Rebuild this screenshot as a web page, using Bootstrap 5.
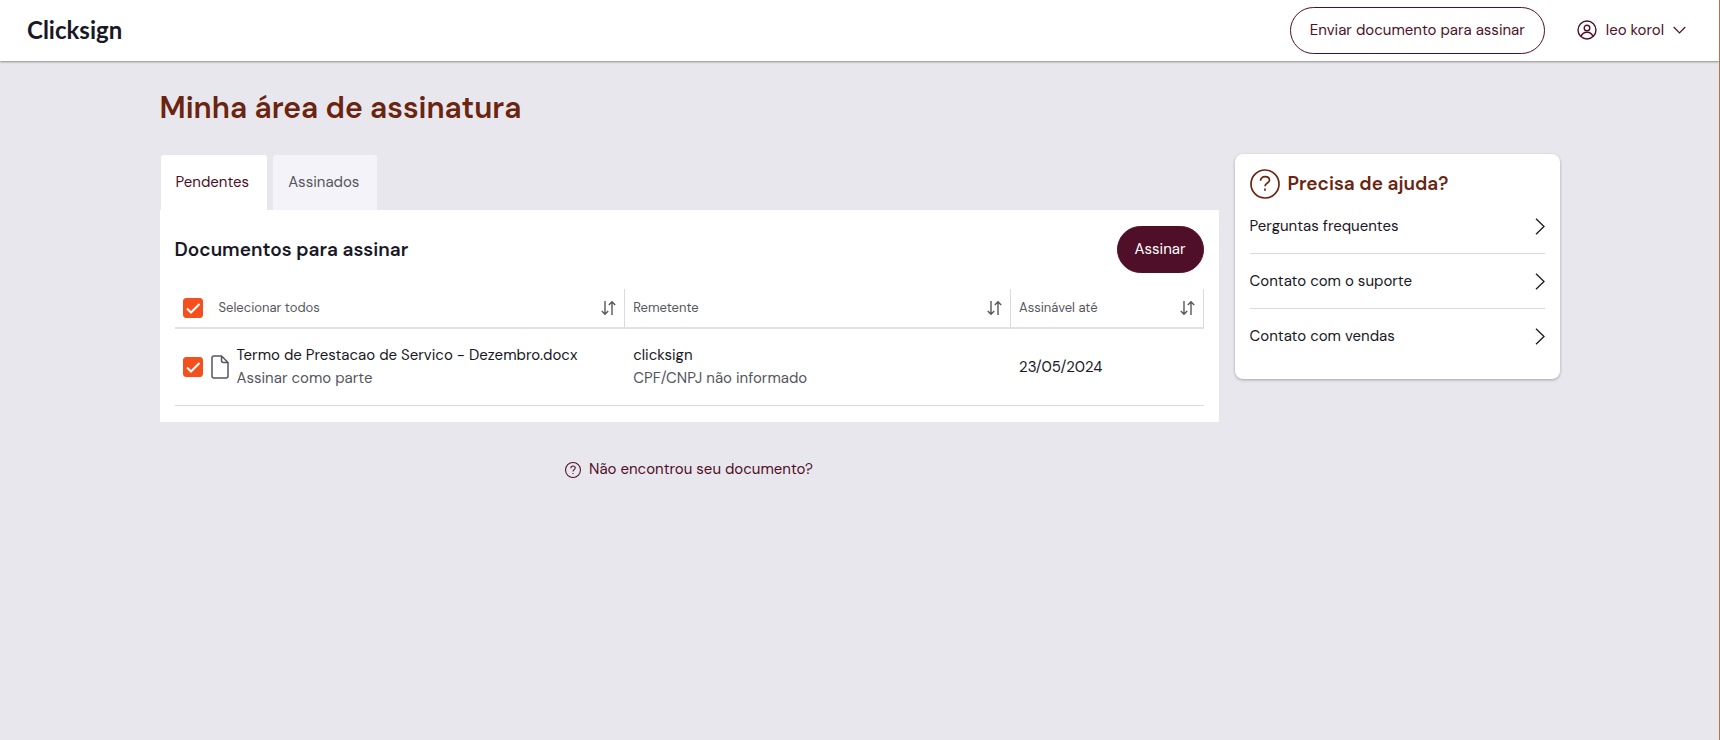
<!DOCTYPE html>
<html lang="pt-BR">
<head>
<meta charset="utf-8">
<meta name="viewport" content="width=device-width, initial-scale=1">
<title>Clicksign - Minha área de assinatura</title>
<link href="https://cdn.jsdelivr.net/npm/bootstrap@5.3.0/dist/css/bootstrap.min.css" rel="stylesheet">
<style>
  :root { --wine: #500f28; --rust: #6a2410; --ink: #191825; --soft: #56565e; --line: #dadae0; --flame: #f4501e; }
  body { font-family: "DM Sans", Inter, "Liberation Sans", sans-serif; font-size: 15px; line-height: 23px; color: var(--ink); background: #e8e7ed; min-height: 100vh; border-right: 1px solid #b07840; }
  svg { display: block; flex: none; fill: none; stroke: currentColor; }
  .topbar { min-height: 61px; box-shadow: 0 1px 2px rgba(0,0,0,.4); padding: 6px 25px 7px 27px; }
  .logo { font-family: Lato, "DM Sans", sans-serif; font-size: 24px; line-height: 30px; font-weight: 700; color: var(--ink); }
  .pill { border-radius: 24px; padding: 11px 17px; font-size: 15px; line-height: 23px; }
  .pill-line { padding: 11px 19px; --bs-btn-color: var(--wine); --bs-btn-border-color: var(--wine); --bs-btn-hover-bg: var(--wine); --bs-btn-hover-color: #fff; }
  .pill-full { --bs-btn-color: #fff; --bs-btn-bg: var(--wine); --bs-btn-border-color: var(--wine); --bs-btn-hover-bg: #6b1c3a; --bs-btn-hover-color: #fff; }
  .user { font-size: 15px; line-height: 23px; padding: 8px; gap: 9px; }
  .wine { color: var(--wine); }
  .rust { color: var(--rust); }
  .soft { color: var(--soft); }
  .shell { max-width: 1400px; }
  .page-title { font-size: 30px; line-height: 40px; font-weight: 600; margin: 27px 0 26px; }
  .sub-title { font-size: 19px; line-height: 28px; font-weight: 600; }
  .tabs { gap: 6px; padding: 1px 0 0 1px; }
  .tabs .nav-link { padding: 16px 18px 16px 15px; border: 0; border-radius: 3px 3px 0 0; background: #f4f3f9; color: var(--soft); }
  .tabs .nav-link.active { background: #fff; color: var(--wine); }
  .panel { padding: 16px 15px 16px; }
  .docs { table-layout: fixed; border-collapse: separate; border-spacing: 0; }
  .docs th { font-size: 13px; line-height: 20px; font-weight: 400; color: var(--soft); padding: 9px 8px; border-bottom: 2px solid #e2e2e6; border-right: 1px solid var(--line); }
  .docs td { padding: 15px 8px; border-bottom: 1px solid var(--line); height: 77px; vertical-align: middle; }
  .docs .form-check-input { width: 20px; height: 20px; margin: 0; flex: none; border-radius: 3px; }
  .docs .form-check-input:checked { background-color: var(--flame); border-color: var(--flame); background-size: 18px 18px; background-image: url("data:image/svg+xml,%3csvg xmlns='http://www.w3.org/2000/svg' viewBox='0 0 18 18'%3e%3cpath fill='none' stroke='%23fff' stroke-width='2' d='M3 9.500l4 4 8.500-8.500'/%3e%3c/svg%3e"); }
  .sort { color: var(--soft); }
  .help { width: 325px; flex: none; padding: 15px 15px 16px; border-radius: 8px; box-shadow: 0 1px 3px rgba(0,0,0,.3); }
  .help-link { padding: 16px 0 15px; border-bottom: 1px solid var(--line); color: var(--ink); }
  .help-link:last-child { border-bottom: 0; }
</style>
</head>
<body>
<header class="topbar bg-white d-flex justify-content-between align-items-center">
  <a class="logo text-decoration-none" href="#">Clicksign</a>
  <div class="d-flex align-items-center gap-4">
    <button class="btn pill pill-line" type="button">Enviar documento para assinar</button>
    <button class="btn user wine border-0 d-flex align-items-center" type="button">
      <svg width="20" height="20" viewBox="0 0 20 20" stroke-width="1.4"><circle cx="10" cy="10" r="9"/><circle cx="10" cy="8" r="2.8"/><path d="M4 16.5c1-3 3-4.3 6-4.3s5 1.300 6 4.300"/></svg>
      leo korol
      <svg width="13" height="8" viewBox="0 0 13 8" stroke-width="1.2"><path d="M.7 1l5.800 5.800L12.300 1"/></svg>
    </button>
  </div>
</header>
<main class="shell mx-auto">
  <h1 class="page-title rust">Minha área de assinatura</h1>
  <div class="d-flex gap-3 align-items-start">
    <div class="flex-grow-1">
      <ul class="nav tabs">
        <li class="nav-item"><button class="nav-link active" type="button">Pendentes</button></li>
        <li class="nav-item"><button class="nav-link" type="button">Assinados</button></li>
      </ul>
      <section class="panel bg-white">
        <div class="d-flex justify-content-between align-items-center mb-3">
          <h2 class="sub-title mb-0">Documentos para assinar</h2>
          <button class="btn pill pill-full" type="button">Assinar</button>
        </div>
        <table class="docs w-100">
          <colgroup><col style="width:43.800%"><col style="width:37.500%"><col></colgroup>
          <thead><tr>
            <th><div class="d-flex align-items-center"><input class="form-check-input" type="checkbox" id="all" checked><label class="ms-3 me-auto" for="all">Selecionar todos</label><svg class="sort" width="15" height="16" viewBox="0 0 15 16" stroke-width="1.4"><path d="M4 1v13M.8 11L4 14.200 7.200 11M11 15V2M7.800 5L11 1.800 14.200 5"/></svg></div></th>
            <th><div class="d-flex align-items-center justify-content-between">Remetente<svg class="sort" width="15" height="16" viewBox="0 0 15 16" stroke-width="1.4"><path d="M4 1v13M.8 11L4 14.200 7.200 11M11 15V2M7.800 5L11 1.800 14.200 5"/></svg></div></th>
            <th><div class="d-flex align-items-center justify-content-between">Assinável até<svg class="sort" width="15" height="16" viewBox="0 0 15 16" stroke-width="1.4"><path d="M4 1v13M.8 11L4 14.200 7.200 11M11 15V2M7.800 5L11 1.800 14.200 5"/></svg></div></th>
          </tr></thead>
          <tbody><tr>
            <td><div class="d-flex align-items-center gap-2"><input class="form-check-input" type="checkbox" id="doc" checked><svg class="soft" width="18" height="24" viewBox="0 0 18 24" stroke-width="1.5"><path d="M10.500 1H3a2 2 0 0 0-2 2v18a2 2 0 0 0 2 2h12a2 2 0 0 0 2-2V7.500zv4.500a2 2 0 0 0 2 2H17"/></svg><label for="doc">Termo de Prestacao de Servico - Dezembro.docx<span class="soft d-block">Assinar como parte</span></label></div></td>
            <td>clicksign<div class="soft">CPF/CNPJ não informado</div></td>
            <td>23/05/2024</td>
          </tr></tbody>
        </table>
      </section>
      <div class="d-flex justify-content-center pt-4 mt-2">
        <a class="wine text-decoration-none d-flex align-items-center gap-2 p-1" href="#">
          <svg width="16" height="16" viewBox="0 0 30 30" stroke-width="2"><circle cx="15" cy="15" r="14"/><path d="M11 11.500c0-2.500 1.800-4 4.200-4s4 1.500 4 3.700c0 3-4.200 3.300-4.200 6.600M15 20.500v2.200"/></svg>
          Não encontrou seu documento?</a>
      </div>
    </div>
    <aside class="help bg-white">
      <div class="d-flex align-items-center gap-2 rust">
        <svg width="30" height="30" viewBox="0 0 30 30" stroke-width="1.700"><circle cx="15" cy="15" r="14"/><path d="M10.500 11.800c0-2.600 2-4.100 4.500-4.100s4.500 1.400 4.500 3.500c0 2.900-4.500 2.800-4.500 6.100M15 19.500v2.300"/></svg>
        <h2 class="sub-title mb-0">Precisa de ajuda?</h2>
      </div>
      <nav>
        <a class="help-link d-flex justify-content-between align-items-center text-decoration-none" href="#">Perguntas frequentes<svg width="10" height="17" viewBox="0 0 10 17" stroke-width="1.300"><path d="M1 .7l8 7.800-8 7.800"/></svg></a>
        <a class="help-link d-flex justify-content-between align-items-center text-decoration-none" href="#">Contato com o suporte<svg width="10" height="17" viewBox="0 0 10 17" stroke-width="1.300"><path d="M1 .7l8 7.800-8 7.800"/></svg></a>
        <a class="help-link d-flex justify-content-between align-items-center text-decoration-none" href="#">Contato com vendas<svg width="10" height="17" viewBox="0 0 10 17" stroke-width="1.300"><path d="M1 .7l8 7.800-8 7.800"/></svg></a>
      </nav>
    </aside>
  </div>
</main>
<script src="https://cdn.jsdelivr.net/npm/bootstrap@5.3.0/dist/js/bootstrap.bundle.min.js"></script>
</body>
</html>
